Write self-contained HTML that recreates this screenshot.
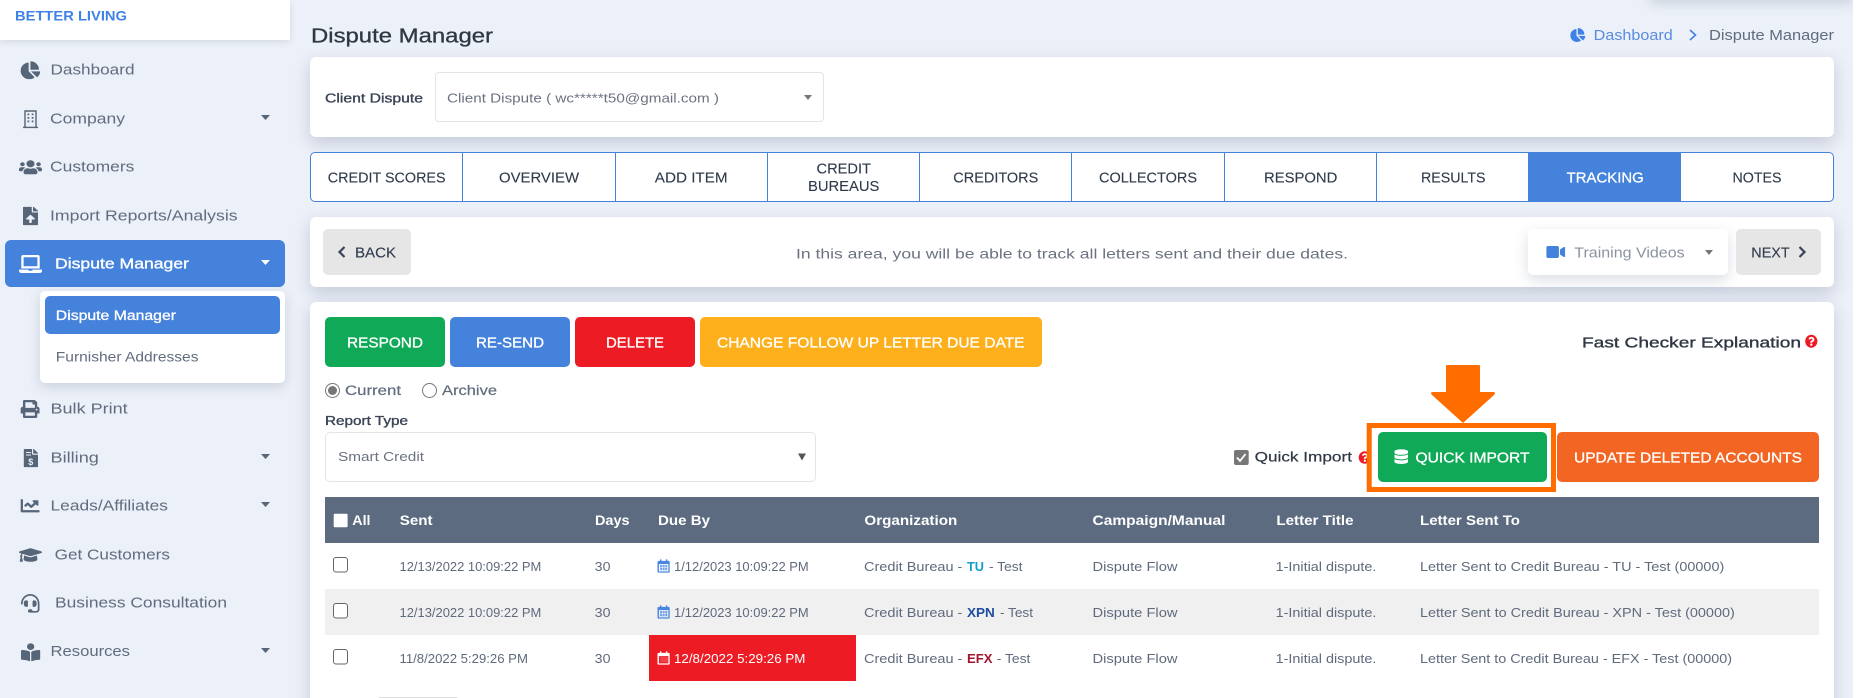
<!DOCTYPE html>
<html lang="en">
<head>
<meta charset="utf-8">
<title>Dispute Manager</title>
<style>
html,body{margin:0;padding:0;background:#ecf0f8;width:1862px;height:698px;overflow:hidden}
body{font-family:"Liberation Sans",sans-serif}
#p{position:relative;width:1862px;height:698px;overflow:hidden;background:#ecf0f8}
.b{position:absolute;box-sizing:border-box}
.card{background:#fff;border-radius:6px;box-shadow:0 6px 16px rgba(70,85,115,.24)}
svg.o{position:absolute;left:0;top:0}
text{font-family:"Liberation Sans",sans-serif;white-space:pre}
.n{font-size:15px;fill:#616c7e}
.t{font-size:14.5px;fill:#2f3a4b;stroke:#2f3a4b;stroke-width:.12}
.w{font-size:14.5px;fill:#fff;stroke:#fff;stroke-width:.3}
.h{font-size:14px;fill:#fff;font-weight:bold}
.r{font-size:13px;fill:#5f6a7c}
.l{font-size:13px;fill:#3a4455;stroke:#3a4455;stroke-width:.35}
</style>
</head>
<body>
<div id="p">
<div class="b" style="left:1650px;top:-12px;width:203px;height:12px;box-shadow:0 3px 12px rgba(70,85,115,.22)"></div>
<div class="b" style="left:0;top:0;width:290px;height:40px;background:#fff;box-shadow:0 2px 6px rgba(70,85,115,.14)"></div>
<div class="b" style="left:5px;top:240px;width:280px;height:47px;background:#4582db;border-radius:6px"></div>
<div class="b" style="left:40px;top:291px;width:245px;height:92px;background:#fff;border-radius:5px;box-shadow:0 4px 12px rgba(70,85,115,.2)"></div>
<div class="b" style="left:45px;top:296px;width:235px;height:38px;background:#4582db;border-radius:5px"></div>

<div class="b card" style="left:310px;top:57px;width:1524px;height:80px"></div>
<div class="b" style="left:435px;top:72px;width:389px;height:50px;border:1px solid #e4e4e4;border-radius:4px;background:#fff"></div>

<div class="b" style="left:310px;top:152px;width:1524px;height:50px;border:1px solid #4582db;border-radius:5px;background:#fff"></div>
<div class="b" style="left:1528px;top:152px;width:153px;height:50px;background:#4582db"></div>
<div class="b" style="left:462px;top:152px;width:1px;height:50px;background:#4582db"></div>
<div class="b" style="left:615px;top:152px;width:1px;height:50px;background:#4582db"></div>
<div class="b" style="left:767px;top:152px;width:1px;height:50px;background:#4582db"></div>
<div class="b" style="left:919px;top:152px;width:1px;height:50px;background:#4582db"></div>
<div class="b" style="left:1071px;top:152px;width:1px;height:50px;background:#4582db"></div>
<div class="b" style="left:1224px;top:152px;width:1px;height:50px;background:#4582db"></div>
<div class="b" style="left:1376px;top:152px;width:1px;height:50px;background:#4582db"></div>

<div class="b card" style="left:310px;top:217px;width:1524px;height:70px"></div>
<div class="b" style="left:323px;top:229px;width:88px;height:46px;background:#e6e6e6;border-radius:5px"></div>
<div class="b" style="left:1528px;top:229px;width:200px;height:46px;background:#fff;border-radius:5px;box-shadow:0 5px 14px rgba(70,85,115,.2)"></div>
<div class="b" style="left:1736px;top:229px;width:85px;height:46px;background:#e6e6e6;border-radius:5px"></div>

<div class="b card" style="left:310px;top:302px;width:1524px;height:420px"></div>
<div class="b" style="left:325px;top:317px;width:120px;height:50px;background:#10a958;border-radius:5px"></div>
<div class="b" style="left:450px;top:317px;width:120px;height:50px;background:#4582db;border-radius:5px"></div>
<div class="b" style="left:575px;top:317px;width:120px;height:50px;background:#ed1c24;border-radius:5px"></div>
<div class="b" style="left:700px;top:317px;width:342px;height:50px;background:#fdb01c;border-radius:5px"></div>
<div class="b" style="left:325px;top:432px;width:491px;height:50px;border:1px solid #e4e4e4;border-radius:5px;background:#fff"></div>

<div class="b" style="left:1378px;top:432px;width:169px;height:50px;background:#10a958;border-radius:5px"></div>
<div class="b" style="left:1557px;top:432px;width:262px;height:50px;background:#f26522;border-radius:5px"></div>

<div class="b" style="left:325px;top:497px;width:1494px;height:46px;background:#5c6b80"></div>
<div class="b" style="left:325px;top:589px;width:1494px;height:46px;background:#f0f0f0"></div>
<div class="b" style="left:649px;top:635px;width:207px;height:46px;background:#ed1c24"></div>
<div class="b" style="left:378px;top:697px;width:80px;height:4px;border:1px solid #ddd;border-radius:4px"></div>

<div class="b" style="left:1853px;top:0;width:9px;height:698px;background:#fff"></div>

<svg class="o" width="1862" height="698" viewBox="0 0 1862 698" xmlns="http://www.w3.org/2000/svg">
<defs>
<symbol id="pie" viewBox="0 0 544 512" preserveAspectRatio="none"><path d="M527.79 288H290.5l158.03 158.03c6.04 6.04 15.98 6.53 22.19.68 38.7-36.46 65.32-85.61 73.13-140.86 1.34-9.46-6.51-17.85-16.06-17.85zm-15.83-64.8C503.72 103.74 408.26 8.28 288.8.04 279.68-.59 272 7.1 272 16.24V240h223.77c9.14 0 16.82-7.68 16.19-16.8zM224 288V50.71c0-9.55-8.39-17.4-17.84-16.06C86.99 51.49-4.1 155.6.14 280.37 4.5 408.51 114.83 513.59 243.03 511.98c50.4-.63 96.97-16.87 135.26-44.03 7.9-5.6 8.42-17.23 1.57-24.08L224 288z"/></symbol>
<symbol id="users" viewBox="0 0 640 512" preserveAspectRatio="none"><path d="M96 224c35.3 0 64-28.7 64-64s-28.7-64-64-64-64 28.7-64 64 28.7 64 64 64zm448 0c35.3 0 64-28.7 64-64s-28.7-64-64-64-64 28.7-64 64 28.7 64 64 64zm32 32h-64c-17.6 0-33.5 7.1-45.1 18.6 40.3 22.1 68.9 62 75.1 109.4h66c17.7 0 32-14.3 32-32v-32c0-35.3-28.7-64-64-64zm-256 0c61.9 0 112-50.1 112-112S381.9 32 320 32 208 82.1 208 144s50.1 112 112 112zm76.8 32h-8.3c-20.8 10-43.9 16-68.5 16s-47.6-6-68.5-16h-8.3C179.6 288 128 339.6 128 403.2V432c0 26.5 21.5 48 48 48h288c26.5 0 48-21.5 48-48v-28.8c0-63.6-51.6-115.2-115.2-115.2zm-223.7-13.4C161.5 263.1 145.6 256 128 256H64c-35.3 0-64 28.7-64 64v32c0 17.7 14.3 32 32 32h65.9c6.3-47.4 34.9-87.3 75.2-109.4z"/></symbol>
<symbol id="upl" viewBox="0 0 384 512" preserveAspectRatio="none"><path d="M224 136V0H24C10.7 0 0 10.7 0 24v464c0 13.3 10.7 24 24 24h336c13.3 0 24-10.7 24-24V160H248c-13.2 0-24-10.8-24-24zm65.18 216.01H224v80c0 8.84-7.16 16-16 16h-32c-8.84 0-16-7.16-16-16v-80H94.82c-14.28 0-21.41-17.29-11.27-27.36l96.42-95.7c6.65-6.61 17.39-6.61 24.04 0l96.42 95.7c10.15 10.07 3.03 27.36-11.25 27.36zM377 105L279.1 7c-4.5-4.5-10.6-7-17-7H256v128h128v-6.1c0-6.3-2.5-12.4-7-16.9z"/></symbol>
<symbol id="lap" viewBox="0 0 640 512" preserveAspectRatio="none"><path d="M624 416H381.54c-.74 19.81-14.71 32-32.74 32H288c-18.69 0-33.02-17.47-32.77-32H16c-8.8 0-16 7.2-16 16v16c0 35.2 28.8 64 64 64h512c35.2 0 64-28.8 64-64v-16c0-8.8-7.2-16-16-16zM576 48c0-26.4-21.6-48-48-48H112C85.6 0 64 21.6 64 48v336h512V48zm-64 272H128V64h384v256z"/></symbol>
<symbol id="prn" viewBox="0 0 512 512" preserveAspectRatio="none"><path d="M448 192V77.25c0-8.49-3.37-16.62-9.37-22.63L393.37 9.37c-6-6-14.14-9.37-22.63-9.37H96C78.33 0 64 14.33 64 32v160c-35.35 0-64 28.65-64 64v112c0 8.84 7.16 16 16 16h48v96c0 17.67 14.33 32 32 32h320c17.67 0 32-14.33 32-32v-96h48c8.84 0 16-7.16 16-16V256c0-35.35-28.65-64-64-64zm-64 256H128v-96h256v96zm0-224H128V64h192v48c0 8.84 7.16 16 16 16h48v96zm48 72c-13.25 0-24-10.75-24-24 0-13.26 10.75-24 24-24s24 10.74 24 24c0 13.25-10.75 24-24 24z"/></symbol>
<symbol id="file" viewBox="0 0 384 512" preserveAspectRatio="none"><path d="M224 136V0H24C10.7 0 0 10.7 0 24v464c0 13.3 10.7 24 24 24h336c13.3 0 24-10.7 24-24V160H248c-13.2 0-24-10.8-24-24zM377 105L279.1 7c-4.5-4.5-10.6-7-17-7H256v128h128v-6.1c0-6.3-2.5-12.4-7-16.9z"/></symbol>
<symbol id="line" viewBox="0 0 512 512" preserveAspectRatio="none"><path d="M496 384H64V80c0-8.84-7.16-16-16-16H16C7.16 64 0 71.16 0 80v336c0 17.67 14.33 32 32 32h464c8.84 0 16-7.16 16-16v-32c0-8.84-7.16-16-16-16zM464 96H345.94c-21.38 0-32.09 25.85-16.97 40.97l32.4 32.4L288 242.75l-73.37-73.37c-12.5-12.5-32.76-12.5-45.25 0l-68.69 68.69c-6.25 6.25-6.25 16.38 0 22.63l22.62 22.62c6.25 6.25 16.38 6.25 22.63 0L192 237.25l73.37 73.37c12.5 12.5 32.76 12.5 45.25 0l96-96 32.4 32.4c15.12 15.12 40.97 4.41 40.97-16.97V112c.01-8.84-7.15-16-15.99-16z"/></symbol>
<symbol id="cap" viewBox="0 0 640 512" preserveAspectRatio="none"><path d="M622.34 153.2L343.4 67.5c-15.2-4.67-31.6-4.67-46.79 0L17.66 153.2c-23.54 7.23-23.54 38.36 0 45.59l48.63 14.94c-10.67 13.19-17.23 29.28-17.88 46.9C38.78 266.15 32 276.11 32 288c0 10.78 5.68 19.85 13.86 25.65L20.33 428.53C18.11 438.52 25.71 448 35.94 448h56.11c10.24 0 17.84-9.48 15.62-19.47L82.14 313.65C90.32 307.85 96 298.78 96 288c0-11.57-6.47-21.25-15.66-26.87.76-15.02 8.44-28.3 20.69-36.72L296.6 284.5c9.06 2.78 26.44 6.25 46.79 0l278.95-85.7c23.55-7.24 23.55-38.36 0-45.6zM352.79 315.09c-28.53 8.76-52.84 3.92-65.59 0l-145.02-44.55L128 384c0 35.35 85.96 64 192 64s192-28.65 192-64l-14.18-113.47-145.03 44.56z"/></symbol>
<symbol id="head" viewBox="0 0 512 512" preserveAspectRatio="none"><path d="M192 208c0-17.67-14.33-32-32-32h-16c-35.35 0-64 28.65-64 64v48c0 35.35 28.65 64 64 64h16c17.67 0 32-14.33 32-32V208zm176 144c35.35 0 64-28.65 64-64v-48c0-35.35-28.65-64-64-64h-16c-17.67 0-32 14.33-32 32v112c0 17.67 14.33 32 32 32h16zM256 0C113.18 0 4.58 118.83 0 256v16c0 8.84 7.16 16 16 16h16c8.84 0 16-7.16 16-16v-16c0-114.69 93.31-208 208-208s208 93.31 208 208h-.12c.08 2.43.12 165.72.12 165.72 0 23.35-18.93 42.28-42.28 42.28H320c0-26.51-21.49-48-48-48h-32c-26.51 0-48 21.49-48 48s21.49 48 48 48h181.72c49.86 0 90.28-40.42 90.28-90.28V256C507.42 118.83 398.82 0 256 0z"/></symbol>
<symbol id="book" viewBox="0 0 512 512" preserveAspectRatio="none"><path d="M352 96c0-53.02-42.98-96-96-96s-96 42.98-96 96 42.98 96 96 96 96-42.98 96-96zM233.59 241.1c-59.33-36.32-155.43-46.3-203.79-49.05C13.55 191.13 0 203.51 0 219.14v222.8c0 14.33 11.59 26.28 26.49 27.05 43.66 2.29 131.99 10.68 193.04 41.43 9.37 4.72 20.48-1.71 20.48-11.87V252.56c-.01-4.67-2.32-8.95-6.42-11.46zm248.61-49.05c-48.35 2.74-144.46 12.73-203.78 49.05-4.1 2.51-6.41 6.96-6.41 11.63v245.79c0 10.19 11.14 16.63 20.54 11.9 61.04-30.72 149.32-39.11 192.97-41.4 14.9-.78 26.49-12.73 26.49-27.06V219.14c-.01-15.63-13.56-28.01-29.81-27.09z"/></symbol>
<symbol id="vid" viewBox="0 0 576 512" preserveAspectRatio="none"><path d="M336.2 64H47.8C21.4 64 0 85.4 0 111.8v288.4C0 426.6 21.4 448 47.8 448h288.4c26.4 0 47.8-21.4 47.8-47.8V111.8c0-26.4-21.4-47.8-47.8-47.8zm189.4 37.7L416 177.3v157.4l109.6 75.5c21.2 14.6 50.4-.3 50.4-25.8V127.5c0-25.4-29.1-40.4-50.4-25.8z"/></symbol>
<symbol id="db" viewBox="0 0 448 512" preserveAspectRatio="none"><path d="M448 73.143v45.714C448 159.143 347.667 192 224 192S0 159.143 0 118.857V73.143C0 32.857 100.333 0 224 0s224 32.857 224 73.143zM448 176v102.857C448 319.143 347.667 352 224 352S0 319.143 0 278.857V176c48.125 33.143 136.208 48.572 224 48.572S399.874 209.143 448 176zm0 160v102.857C448 479.143 347.667 512 224 512S0 479.143 0 438.857V336c48.125 33.143 136.208 48.572 224 48.572S399.874 369.143 448 336z"/></symbol>
<symbol id="q" viewBox="0 0 512 512" preserveAspectRatio="none"><path d="M504 256c0 136.997-111.043 248-248 248S8 392.997 8 256C8 119.083 119.043 8 256 8s248 111.083 248 248zM262.655 90c-54.497 0-89.255 22.957-116.549 63.758-3.536 5.286-2.353 12.415 2.715 16.258l34.699 26.31c5.205 3.947 12.621 3.008 16.665-2.122 17.864-22.658 30.113-35.797 57.303-35.797 20.429 0 45.698 13.148 45.698 32.958 0 14.976-12.363 22.667-32.534 33.976C247.128 238.528 216 254.941 216 296v4c0 6.627 5.373 12 12 12h56c6.627 0 12-5.373 12-12v-1.333c0-28.462 83.186-29.647 83.186-106.667 0-58.002-60.165-102-116.531-102zM256 338c-25.365 0-46 20.635-46 46 0 25.364 20.635 46 46 46s46-20.636 46-46c0-25.365-20.635-46-46-46z"/></symbol>
<symbol id="cal" viewBox="0 0 12 14" preserveAspectRatio="none"><path fill-rule="evenodd" d="M2.4 0h1.4v1.6h4.4V0h1.4v1.6h1.1c.7 0 1.3.6 1.3 1.3v9.8c0 .7-.6 1.3-1.3 1.3H1.3C.6 14 0 13.4 0 12.7V2.9c0-.7.6-1.3 1.3-1.3h1.1zM1.4 5v7.6h9.2V5z"/><path d="M2.5 6h7v5.5h-7z" opacity=".75"/><path d="M2.5 8.2h7v.5h-7zM4.6 6h.5v5.5h-.5zM7 6h.5v5.5H7z" fill="#fff"/></symbol>
</defs>

<!-- sidebar -->
<text x="15" y="20.5" font-size="14" font-weight="bold" fill="#3f82e5" textLength="112" lengthAdjust="spacingAndGlyphs">BETTER LIVING</text>

<use href="#pie" x="20.6" y="61.3" width="19.6" height="18" fill="#566577"/>
<text class="n" x="50.5" y="74.5" textLength="84" lengthAdjust="spacingAndGlyphs">Dashboard</text>

<g fill="none" stroke="#566577" stroke-width="1.4"><path d="M25 127.3V111h11v16.3"/><path d="M23 127.4h15"/></g>
<path d="M27.5 113.5h1.8v1.8h-1.8zM31.7 113.5h1.8v1.8h-1.8zM27.5 117h1.8v1.8h-1.8zM31.7 117h1.8v1.8h-1.8zM27.5 120.5h1.8v1.8h-1.8zM31.7 120.5h1.8v1.8h-1.8z" fill="#566577"/>
<text class="n" x="50" y="123.3" textLength="75" lengthAdjust="spacingAndGlyphs">Company</text>
<path d="M261 115h9l-4.5 5z" fill="#566577"/>

<use href="#users" x="19" y="159.3" width="23" height="16" fill="#566577"/>
<text class="n" x="50" y="171.3" textLength="84.4" lengthAdjust="spacingAndGlyphs">Customers</text>

<use href="#upl" x="23" y="206.7" width="15" height="18.6" fill="#566577"/>
<text class="n" x="50" y="220.7" textLength="187.6" lengthAdjust="spacingAndGlyphs">Import Reports/Analysis</text>

<use href="#lap" x="19" y="255" width="23" height="18" fill="#fff"/>
<text x="55" y="268.3" font-size="15" fill="#fff" stroke="#fff" stroke-width=".35" textLength="134" lengthAdjust="spacingAndGlyphs">Dispute Manager</text>
<path d="M261 260h9l-4.5 5z" fill="#fff"/>

<text x="55.8" y="320" font-size="13.5" fill="#fff" stroke="#fff" stroke-width=".3" textLength="120.2" lengthAdjust="spacingAndGlyphs">Dispute Manager</text>
<text x="55.8" y="361.3" font-size="13.5" fill="#616c7e" textLength="142.7" lengthAdjust="spacingAndGlyphs">Furnisher Addresses</text>

<use href="#prn" x="20.6" y="400" width="19" height="18" fill="#566577"/>
<text class="n" x="50.5" y="413.3" textLength="77.2" lengthAdjust="spacingAndGlyphs">Bulk Print</text>

<use href="#file" x="23.7" y="449" width="14.3" height="18.3" fill="#566577"/>
<path d="M26 452.5h5M26 455h5" stroke="#ecf0f8" stroke-width=".9"/>
<text x="30.8" y="465" font-size="9" font-weight="bold" fill="#ecf0f8" text-anchor="middle">$</text>
<text class="n" x="50.5" y="462.3" textLength="48.4" lengthAdjust="spacingAndGlyphs">Billing</text>
<path d="M261 454h9l-4.5 5z" fill="#566577"/>

<use href="#line" x="20.6" y="497" width="19" height="17.5" fill="#566577"/>
<text class="n" x="50.5" y="510.3" textLength="117.5" lengthAdjust="spacingAndGlyphs">Leads/Affiliates</text>
<path d="M261 502h9l-4.5 5z" fill="#566577"/>

<use href="#cap" x="19" y="546" width="23" height="18" fill="#566577"/>
<text class="n" x="54.6" y="559.3" textLength="115.4" lengthAdjust="spacingAndGlyphs">Get Customers</text>

<use href="#head" x="21" y="594" width="18.5" height="18.7" fill="#566577"/>
<text class="n" x="55" y="607.3" textLength="172" lengthAdjust="spacingAndGlyphs">Business Consultation</text>

<use href="#book" x="21" y="643.3" width="19.3" height="18" fill="#566577"/>
<text class="n" x="50.5" y="656" textLength="79.5" lengthAdjust="spacingAndGlyphs">Resources</text>
<path d="M261 648h9l-4.5 5z" fill="#566577"/>

<!-- title + breadcrumb -->
<text x="311" y="42.3" font-size="20.5" fill="#2f3744" stroke="#2f3744" stroke-width=".3" textLength="182" lengthAdjust="spacingAndGlyphs">Dispute Manager</text>
<use href="#pie" x="1570.3" y="28" width="15" height="14" fill="#3f82e5"/>
<text x="1593.7" y="40" font-size="14.5" fill="#5b8be0" textLength="79" lengthAdjust="spacingAndGlyphs">Dashboard</text>
<path d="M1690 30l5.5 5-5.500 5" fill="none" stroke="#4582db" stroke-width="1.6"/>
<text x="1709" y="40" font-size="14.5" fill="#616c7e" textLength="125" lengthAdjust="spacingAndGlyphs">Dispute Manager</text>

<!-- client dispute -->
<text class="l" x="325" y="102.3" textLength="98" lengthAdjust="spacingAndGlyphs">Client Dispute</text>
<text x="447" y="102.3" font-size="13" fill="#6b7280" textLength="272" lengthAdjust="spacingAndGlyphs">Client Dispute ( wc*****t50@gmail.com )</text>
<path d="M804 95h8l-4 5z" fill="#777"/>

<!-- tabs -->
<text class="t" x="327.8" y="182.3" textLength="117.8" lengthAdjust="spacingAndGlyphs">CREDIT SCORES</text>
<text class="t" x="499" y="182.3" textLength="80" lengthAdjust="spacingAndGlyphs">OVERVIEW</text>
<text class="t" x="654.8" y="182.3" textLength="72.8" lengthAdjust="spacingAndGlyphs">ADD ITEM</text>
<text class="t" x="816.5" y="173.3" textLength="54.5" lengthAdjust="spacingAndGlyphs">CREDIT</text>
<text class="t" x="808" y="191" textLength="71.4" lengthAdjust="spacingAndGlyphs">BUREAUS</text>
<text class="t" x="953.3" y="182.3" textLength="85" lengthAdjust="spacingAndGlyphs">CREDITORS</text>
<text class="t" x="1099" y="182.3" textLength="98" lengthAdjust="spacingAndGlyphs">COLLECTORS</text>
<text class="t" x="1264" y="182.3" textLength="73.3" lengthAdjust="spacingAndGlyphs">RESPOND</text>
<text class="t" x="1421" y="182.3" textLength="64.5" lengthAdjust="spacingAndGlyphs">RESULTS</text>
<text class="w" x="1566.7" y="182.3" textLength="77" lengthAdjust="spacingAndGlyphs">TRACKING</text>
<text class="t" x="1732.5" y="182.3" textLength="49" lengthAdjust="spacingAndGlyphs">NOTES</text>

<!-- nav bar -->
<path d="M344.5 247l-5 5 5 5" fill="none" stroke="#3a4455" stroke-width="2.2"/>
<text class="t" x="355" y="257.3" textLength="41" lengthAdjust="spacingAndGlyphs">BACK</text>
<text x="796" y="258.3" font-size="14" fill="#6b7280" textLength="552" lengthAdjust="spacingAndGlyphs">In this area, you will be able to track all letters sent and their due dates.</text>
<use href="#vid" x="1546.3" y="244" width="18.9" height="16" fill="#4582db"/>
<text x="1574.3" y="257.3" font-size="14.5" fill="#8a93a0" textLength="110.3" lengthAdjust="spacingAndGlyphs">Training Videos</text>
<path d="M1705 250h8l-4 5z" fill="#777"/>
<text class="t" x="1751.3" y="257.3" textLength="38.4" lengthAdjust="spacingAndGlyphs">NEXT</text>
<path d="M1799.5 247l5 5-5 5" fill="none" stroke="#3a4455" stroke-width="2.2"/>

<!-- action buttons -->
<text class="w" x="347" y="347.3" textLength="76" lengthAdjust="spacingAndGlyphs">RESPOND</text>
<text class="w" x="476" y="347.3" textLength="68" lengthAdjust="spacingAndGlyphs">RE-SEND</text>
<text class="w" x="606" y="347.3" textLength="58" lengthAdjust="spacingAndGlyphs">DELETE</text>
<text class="w" x="717" y="347.3" textLength="307.5" lengthAdjust="spacingAndGlyphs">CHANGE FOLLOW UP LETTER DUE DATE</text>

<text x="1582" y="347.3" font-size="15" fill="#2f3744" stroke="#2f3744" stroke-width=".35" textLength="219" lengthAdjust="spacingAndGlyphs">Fast Checker Explanation</text>
<use href="#q" x="1805" y="334.5" width="12.6" height="13.5" fill="#ed1c24"/>

<!-- radios -->
<circle cx="332.5" cy="390.5" r="7" fill="#fff" stroke="#777" stroke-width="1"/>
<circle cx="332.5" cy="390.5" r="4.5" fill="#777"/>
<text x="345" y="395" font-size="13.5" fill="#616c7e" stroke="#616c7e" stroke-width=".2" textLength="56" lengthAdjust="spacingAndGlyphs">Current</text>
<circle cx="429.5" cy="390.5" r="7" fill="#fff" stroke="#777" stroke-width="1"/>
<text x="442" y="395" font-size="13.5" fill="#616c7e" stroke="#616c7e" stroke-width=".2" textLength="55" lengthAdjust="spacingAndGlyphs">Archive</text>

<text class="l" x="325" y="425" textLength="83" lengthAdjust="spacingAndGlyphs">Report Type</text>
<text x="338" y="461" font-size="13" fill="#6b7280" textLength="86" lengthAdjust="spacingAndGlyphs">Smart Credit</text>
<path d="M798 453.5h8l-4 7z" fill="#555"/>

<!-- quick import -->
<rect x="1234" y="450" width="14.7" height="15" rx="2" fill="#777"/>
<path d="M1237 457.5l3 3.5 5.5-7" fill="none" stroke="#fff" stroke-width="1.8"/>
<text x="1254.6" y="461.7" font-size="14" fill="#2f3744" stroke="#2f3744" stroke-width=".2" textLength="97.4" lengthAdjust="spacingAndGlyphs">Quick Import</text>
<use href="#q" x="1358.5" y="451" width="12.6" height="13" fill="#ed1c24"/>

<path d="M1369.2 425.5h184.3v64h-184.3z" fill="none" stroke="#ff6d00" stroke-width="5"/>
<path d="M1446 366q0-1 1-1h32q1 0 1 1v26h13q2 0 2 1t-1 2l-31 28-31-28q-1-1-1-2t2-1h13z" fill="#ff6d00"/>
<use href="#db" x="1394.5" y="449.3" width="13.5" height="14.7" fill="#fff"/>
<text class="w" x="1415.5" y="462.3" textLength="114" lengthAdjust="spacingAndGlyphs">QUICK IMPORT</text>
<text class="w" x="1574" y="462.3" textLength="228" lengthAdjust="spacingAndGlyphs">UPDATE DELETED ACCOUNTS</text>

<!-- table head -->
<rect x="333.7" y="513.7" width="13.9" height="13.6" rx="1" fill="#fff"/>
<text class="h" x="352.3" y="525" textLength="18.2" lengthAdjust="spacingAndGlyphs">All</text>
<text class="h" x="399.8" y="525" textLength="32.8" lengthAdjust="spacingAndGlyphs">Sent</text>
<text class="h" x="595" y="525" textLength="34.5" lengthAdjust="spacingAndGlyphs">Days</text>
<text class="h" x="658" y="525" textLength="52" lengthAdjust="spacingAndGlyphs">Due By</text>
<text class="h" x="864.4" y="525" textLength="92.9" lengthAdjust="spacingAndGlyphs">Organization</text>
<text class="h" x="1092.5" y="525" textLength="132.9" lengthAdjust="spacingAndGlyphs">Campaign/Manual</text>
<text class="h" x="1276.4" y="525" textLength="77.1" lengthAdjust="spacingAndGlyphs">Letter Title</text>
<text class="h" x="1420" y="525" textLength="100" lengthAdjust="spacingAndGlyphs">Letter Sent To</text>

<!-- row 1 -->
<rect x="333.5" y="557.5" width="14" height="14.5" rx="2.5" fill="#fff" stroke="#666"/>
<text class="r" x="399.5" y="571" textLength="141.8" lengthAdjust="spacingAndGlyphs">12/13/2022 10:09:22 PM</text>
<text class="r" x="594.7" y="571" textLength="15.8" lengthAdjust="spacingAndGlyphs">30</text>
<use href="#cal" x="657.5" y="559.3" width="12.3" height="13.4" fill="#4a86e0"/>
<text class="r" x="674" y="571" textLength="134.7" lengthAdjust="spacingAndGlyphs">1/12/2023 10:09:22 PM</text>
<text class="r" x="864" y="571" textLength="98.4" lengthAdjust="spacingAndGlyphs">Credit Bureau -</text>
<text x="967" y="571" font-size="13" font-weight="bold" fill="#0f9fc9" textLength="17" lengthAdjust="spacingAndGlyphs">TU</text>
<text class="r" x="989" y="571" textLength="33.5" lengthAdjust="spacingAndGlyphs">- Test</text>
<text class="r" x="1092.5" y="571" textLength="85" lengthAdjust="spacingAndGlyphs">Dispute Flow</text>
<text class="r" x="1275.6" y="571" textLength="100.8" lengthAdjust="spacingAndGlyphs">1-Initial dispute.</text>
<text class="r" x="1420" y="571" textLength="304.3" lengthAdjust="spacingAndGlyphs">Letter Sent to Credit Bureau - TU - Test (00000)</text>

<!-- row 2 -->
<rect x="333.5" y="603.5" width="14" height="14.5" rx="2.5" fill="#fff" stroke="#666"/>
<text class="r" x="399.5" y="617" textLength="141.8" lengthAdjust="spacingAndGlyphs">12/13/2022 10:09:22 PM</text>
<text class="r" x="594.7" y="617" textLength="15.8" lengthAdjust="spacingAndGlyphs">30</text>
<use href="#cal" x="657.5" y="605.3" width="12.3" height="13.4" fill="#4a86e0"/>
<text class="r" x="674" y="617" textLength="134.7" lengthAdjust="spacingAndGlyphs">1/12/2023 10:09:22 PM</text>
<text class="r" x="864" y="617" textLength="98.4" lengthAdjust="spacingAndGlyphs">Credit Bureau -</text>
<text x="967" y="617" font-size="13" font-weight="bold" fill="#1f4e9e" textLength="27.8" lengthAdjust="spacingAndGlyphs">XPN</text>
<text class="r" x="1000" y="617" textLength="33" lengthAdjust="spacingAndGlyphs">- Test</text>
<text class="r" x="1092.5" y="617" textLength="85" lengthAdjust="spacingAndGlyphs">Dispute Flow</text>
<text class="r" x="1275.6" y="617" textLength="100.8" lengthAdjust="spacingAndGlyphs">1-Initial dispute.</text>
<text class="r" x="1420" y="617" textLength="314.8" lengthAdjust="spacingAndGlyphs">Letter Sent to Credit Bureau - XPN - Test (00000)</text>

<!-- row 3 -->
<rect x="333.5" y="649.5" width="14" height="14.5" rx="2.5" fill="#fff" stroke="#666"/>
<text class="r" x="399.5" y="663" textLength="128.4" lengthAdjust="spacingAndGlyphs">11/8/2022 5:29:26 PM</text>
<text class="r" x="594.7" y="663" textLength="15.8" lengthAdjust="spacingAndGlyphs">30</text>
<use href="#cal" x="657.5" y="651.3" width="12.3" height="13.4" fill="#fff"/>
<path d="M660 657h7v5.5h-7z" fill="#ed1c24" opacity=".8"/>
<text x="674" y="663" font-size="13" fill="#fff" textLength="131.4" lengthAdjust="spacingAndGlyphs">12/8/2022 5:29:26 PM</text>
<text class="r" x="864" y="663" textLength="98.4" lengthAdjust="spacingAndGlyphs">Credit Bureau -</text>
<text x="967" y="663" font-size="13" font-weight="bold" fill="#a3142e" textLength="25.5" lengthAdjust="spacingAndGlyphs">EFX</text>
<text class="r" x="996.8" y="663" textLength="33.6" lengthAdjust="spacingAndGlyphs">- Test</text>
<text class="r" x="1092.5" y="663" textLength="85" lengthAdjust="spacingAndGlyphs">Dispute Flow</text>
<text class="r" x="1275.6" y="663" textLength="100.8" lengthAdjust="spacingAndGlyphs">1-Initial dispute.</text>
<text class="r" x="1420" y="663" textLength="312" lengthAdjust="spacingAndGlyphs">Letter Sent to Credit Bureau - EFX - Test (00000)</text>
</svg>
</div>
</body>
</html>
